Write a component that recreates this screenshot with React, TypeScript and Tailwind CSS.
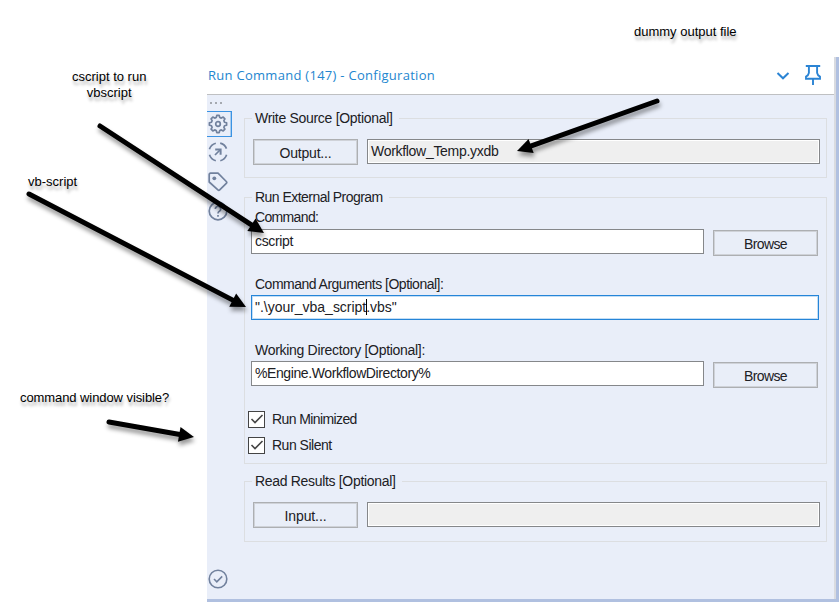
import React from "react";
import clsx from "clsx";

const arrows = [
  { x1: 100, y1: 126, x2: 264, y2: 233 },
  { x1: 29, y1: 194, x2: 246, y2: 307 },
  { x1: 657, y1: 101, x2: 517, y2: 151 },
  { x1: 109, y1: 422, x2: 194, y2: 437 },
];

function Arrow({ x1, y1, x2, y2 }: { x1: number; y1: number; x2: number; y2: number }) {
  const length = Math.hypot(x2 - x1, y2 - y1);
  const angle = (Math.atan2(y2 - y1, x2 - x1) * 180) / Math.PI;
  return (
    <g transform={`translate(${x1} ${y1}) rotate(${angle})`}>
      <line x1="0" y1="0" x2={length - 10} y2="0" stroke="#000" strokeWidth="5" strokeLinecap="round" />
      <polygon points={`${length},0 ${length - 15},-7.5 ${length - 15},7.5`} fill="#000" />
    </g>
  );
}

function Note({ className, children }: { className: string; children: React.ReactNode }) {
  return (
    <p
      className={clsx(
        "absolute whitespace-nowrap text-center font-['Liberation_Sans',sans-serif] text-[13px] leading-4 text-black [text-shadow:1px_4px_3px_rgba(0,0,0,0.3)]",
        className
      )}
    >
      {children}
    </p>
  );
}

function Group({ title, titleClass, className, children }: { title: string; titleClass: string; className: string; children: React.ReactNode }) {
  return (
    <section className={clsx("border border-[#dcdee1]", className)}>
      <h2 className={clsx("-mt-[11px] ml-[7px] h-5 w-fit bg-[#e9eef9] pl-[3px] pr-1.5 leading-5", titleClass)}>{title}</h2>
      {children}
    </section>
  );
}

function Button({ className, children }: { className?: string; children: React.ReactNode }) {
  return (
    <button
      className={clsx(
        "h-[26px] w-[105px] shrink-0 border border-[#adafb2] bg-[#e9eef8] pt-px leading-5 shadow-[inset_0_0_0_1px_#cfd2d8]",
        className
      )}
    >
      {children}
    </button>
  );
}

function Field({ className, children }: { className?: string; children?: React.ReactNode }) {
  return (
    <div className={clsx("h-[25px] border pl-[3px] leading-[23px] whitespace-nowrap", className)}>
      {children}
    </div>
  );
}

function Check({ label, className }: { label: string; className: string }) {
  return (
    <label className="flex h-[26px] items-center gap-[7px]">
      <span className="flex size-[17px] items-center justify-center border-[1.5px] border-[#444] bg-white">
        <svg width="14" height="14" viewBox="0 0 14 14" fill="none" stroke="#444" strokeWidth="1.6">
          <path d="M1.5 7 5 10.5 12.5 3" />
        </svg>
      </span>
      <span className={className}>{label}</span>
    </label>
  );
}

function Rail() {
  return (
    <nav className="flex w-[37px] shrink-0 flex-col text-[#71819d]">
      <div className="flex h-4 items-center gap-[3px] pl-[3px]">
        <i className="size-[2px] bg-[#a5a9b0]" />
        <i className="size-[2px] bg-[#a5a9b0]" />
        <i className="size-[2px] bg-[#a5a9b0]" />
      </div>
      <div className="flex h-[26px] w-[25px] items-center border border-l-0 border-[#3b93e3] pl-px shadow-[inset_-1px_0_0_#a9cdf0]">
        <svg width="20" height="20" viewBox="0 0 20 20" fill="none" stroke="currentColor" strokeWidth="1.7" strokeLinejoin="round">
          <path d="M8.2 3.5 8.8 1.4h2.4l.6 2.1 1.5.6 1.9-1 1.7 1.7-1 1.9.6 1.5 2.1.6v2.4l-2.1.6-.6 1.5 1 1.9-1.7 1.7-1.9-1-1.5.6-.6 2.1H8.8l-.6-2.1-1.5-.6-1.9 1-1.7-1.7 1-1.9-.6-1.5-2.1-.6V8.8l2.1-.6.6-1.5-1-1.9 1.7-1.7 1.9 1Z" />
          <circle cx="10" cy="10" r="2.3" />
        </svg>
      </div>
      <svg className="mt-[5px] ml-px" width="20" height="20" viewBox="0 0 20 20" fill="none" stroke="currentColor" strokeWidth="1.7">
        <path d="M12.2 1.1a9.1 9.1 0 0 1 6.3 5.5M18.6 12.8a9.1 9.1 0 0 1-6.3 6M7.8 18.8a9.1 9.1 0 0 1-6.3-6M1.4 7.2a9.1 9.1 0 0 1 6.4-6" />
        <path d="M7 13 12 8" />
        <path d="M7.2 7.4h5.4v5.4" strokeWidth="2" />
      </svg>
      <svg className="mt-[10px] ml-px" width="20" height="20" viewBox="0 0 20 20" fill="none" stroke="currentColor" strokeWidth="1.7" strokeLinejoin="round">
        <path d="M1.2 2.5Q1.2 1.2 2.5 1.2H10l8.3 8.3q.9.9 0 1.8l-6.6 6.6q-.9.9-1.8 0L1.2 10Z" />
        <circle cx="6.3" cy="6.3" r="1.9" fill="currentColor" stroke="none" />
      </svg>
      <svg className="mt-[9px] ml-px" width="20" height="20" viewBox="0 0 20 20" fill="none" stroke="currentColor" strokeWidth="1.7">
        <circle cx="10" cy="10" r="8.8" />
        <path d="M7.3 8a2.7 2.7 0 1 1 4.1 2.3Q10 11.1 10 12.4M10 14v1.7" />
      </svg>
      <svg className="mt-auto mb-[10px] ml-px" width="20" height="20" viewBox="0 0 20 20" fill="none" stroke="currentColor" strokeWidth="1.6">
        <circle cx="10" cy="10" r="8.8" />
        <path d="m6 10 2.8 2.8 5.4-5.4" />
      </svg>
    </nav>
  );
}

export default function App() {
  return (
    <div className="relative h-[602px] w-[840px] overflow-hidden bg-white pt-[57px] pl-[207px]">
      <div className="flex h-[545px] w-[632px] flex-col border-r-[3px] border-b-[3px] border-[#b0c0e0] bg-[#e9eef9]">
        <div className="flex min-h-0 flex-1 flex-col border-r-2 border-[#d9dbe0]">
          {/* Title bar */}
          <header className="flex h-[38px] shrink-0 items-center border-b border-[#bfc0c2] bg-white pl-px">
            <h1 className="font-['Open_Sans',sans-serif] text-[13px] tracking-[0.28px] whitespace-nowrap text-[#2386cf]">
              Run Command (147) - Configuration
            </h1>
            <svg className="mr-[14px] ml-auto" width="14" height="8" viewBox="0 0 14 8" fill="none" stroke="#2b84d4" strokeWidth="2">
              <path d="m1.5 1 5.5 5.3L12.5 1" />
            </svg>
            <svg className="mr-3 -mt-[2px]" width="18" height="22" viewBox="0 0 18 22" fill="none" stroke="#2b84d4" strokeWidth="1.9">
              <path d="M1.8 2h14.4M4.9 2v6.8Q4.5 11.3 2 12.7v2.1h14v-2.1q-2.5-1.4-2.9-3.9V2M9 15v6" />
            </svg>
          </header>

          <div className="flex min-h-0 flex-1 font-['Liberation_Sans',sans-serif] text-[14px] text-[#202024]">
            <Rail />
            <main className="flex w-[583px] flex-col pt-[23px]">
              <Group title="Write Source [Optional]" titleClass="tracking-[-0.3px]" className="h-[60px]">
                <div className="mt-[11px] flex gap-2 pl-2">
                  <Button className="tracking-[-0.2px]">Output...</Button>
                  <Field className="ml-px w-[453px] border-[#85878a] bg-[#efefef] tracking-[-0.3px] shadow-[inset_0_0_0_1px_#fff]">Workflow_Temp.yxdb</Field>
                </div>
              </Group>

              <Group title="Run External Program" titleClass="tracking-[-0.54px]" className="mt-[19px] h-[267px]">
                <div className="pl-1.5">
                  <div className="h-[23px] pl-1 leading-5 tracking-[-0.65px]">Command:</div>
                  <div className="-mt-px flex items-start gap-[9px]">
                    <Field className="w-[453px] border-[#85878a] bg-white tracking-[-0.35px]">cscript</Field>
                    <Button className="mt-px tracking-[-0.6px]">Browse</Button>
                  </div>
                  <div className="mt-[18px] h-[21px] pl-1 leading-5 tracking-[-0.51px]">Command Arguments [Optional]:</div>
                  <Field className="w-[568px] border-[#2585d8] bg-white tracking-[-0.02px] shadow-[inset_0_0_0_1px_#c4def5]">
                    ".\your_vba_script<span className="-mr-px inline-block h-4 w-px bg-black align-[-3px]" />.vbs"
                  </Field>
                  <div className="mt-5 h-[21px] pl-1 leading-5 tracking-[-0.3px]">Working Directory [Optional]:</div>
                  <div className="flex items-start gap-[9px]">
                    <Field className="w-[453px] border-[#85878a] bg-white tracking-[-0.4px]">%Engine.WorkflowDirectory%</Field>
                    <Button className="mt-px tracking-[-0.6px]">Browse</Button>
                  </div>
                </div>
                <div className="mt-[18px] pl-[3px]">
                  <Check label="Run Minimized" className="tracking-[-0.6px]" />
                  <Check label="Run Silent" className="tracking-[-0.5px]" />
                </div>
              </Group>

              <Group title="Read Results [Optional]" titleClass="tracking-[-0.32px]" className="mt-[17px] h-[61px]">
                <div className="mt-[11px] flex gap-2 pl-2">
                  <Button className="tracking-[-0.1px]">Input...</Button>
                  <Field className="ml-px w-[453px] border-[#85878a] bg-[#efefef] shadow-[inset_0_0_0_1px_#fff]" />
                </div>
              </Group>
            </main>
          </div>
        </div>
      </div>

      {/* Callouts */}
      <Note className="top-6 left-[634px]">dummy output file</Note>
      <Note className="top-[69px] left-[72px]">
        cscript to run
        <br />
        vbscript
      </Note>
      <Note className="top-[174px] left-[28px]">vb-script</Note>
      <Note className="top-[390px] left-[20px] tracking-[-0.08px]">command window visible?</Note>
      <svg
        className="pointer-events-none absolute inset-0 drop-shadow-[1px_4px_2px_rgba(0,0,0,0.4)]"
        width="840"
        height="602"
        viewBox="0 0 840 602"
      >
        {arrows.map((a) => (
          <Arrow key={a.x1} {...a} />
        ))}
      </svg>
    </div>
  );
}
